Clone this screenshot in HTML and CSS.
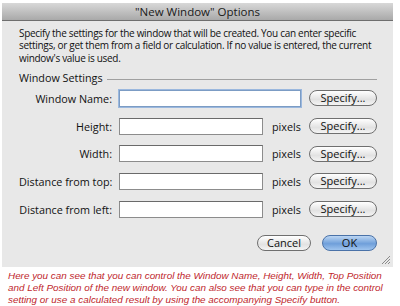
FILE: index.html
```html
<!DOCTYPE html>
<html lang="en">
<head>
  <meta charset="UTF-8" />
  <title>"New Window" Options</title>
  <link rel="stylesheet" href="styles.css">
</head>
<body>
  <div class="dialog">
    <div class="title-bar">"New Window" Options</div>
    <div class="dialog-body">
      <p class="intro">Specify the settings for the window that will be created. You can enter specific settings, or get them from a field or calculation. If no value is entered, the current window's value is used.</p>

      <div class="group-title"><span>Window Settings</span><div class="rule"></div></div>

      <div class="settings">
        <label>Window Name:</label>
        <input type="text" class="field wide focused" />
        <button class="pill">Specify...</button>

        <label>Height:</label>
        <input type="text" class="field" />
        <span class="unit">pixels</span>
        <button class="pill">Specify...</button>

        <label>Width:</label>
        <input type="text" class="field" />
        <span class="unit">pixels</span>
        <button class="pill">Specify...</button>

        <label>Distance from top:</label>
        <input type="text" class="field" />
        <span class="unit">pixels</span>
        <button class="pill">Specify...</button>

        <label>Distance from left:</label>
        <input type="text" class="field" />
        <span class="unit">pixels</span>
        <button class="pill">Specify...</button>
      </div>

      <div class="actions">
        <button class="pill action">Cancel</button>
        <button class="pill action default">OK</button>
      </div>
    </div>
    <svg class="grip" width="9" height="9" viewBox="0 0 9 9">
      <path d="M1 9 L9 1 M4 9 L9 4 M7 9 L9 7" stroke="#8a8a8a" stroke-width="1" fill="none"/>
    </svg>
  </div>

  <p class="caption">Here you can see that you can control the Window Name, Height, Width, Top Position and Left Position of the new window. You can also see that you can type in the control setting or use a calculated result by using the accompanying Specify button.</p>
</body>
</html>
```

FILE: styles.css
```css
html, body {
  margin: 0;
  padding: 0;
  background: #ffffff;
  font-family: "Open Sans", "DejaVu Sans", sans-serif;
  color: #111;
}
.dialog {
  position: relative;
  margin: 3px 0 0 2px;
  width: 391px;
  height: 264px;
  background: #e8e8e8;
  box-sizing: border-box;
}
.title-bar {
  height: 17px;
  line-height: 17px;
  text-align: center;
  font-size: 11.5px;
  color: #1a1a1a;
  background: linear-gradient(#d8d8d8, #a9a9a9);
  border-bottom: 1px solid #6e6e6e;
}
.dialog-body {
  padding: 6px 14px 0 17px;
}
.intro {
  margin: 0;
  font-size: 10px;
  line-height: 12.3px;
  letter-spacing: -0.3px;
}
.group-title {
  display: flex;
  align-items: center;
  margin-top: 6px;
  font-size: 10.8px;
}
.group-title .rule {
  flex: 1;
  height: 1px;
  margin: 5px 2px 0 4px;
  background: #a0a0a0;
}
.settings {
  display: grid;
  grid-template-columns: 100px 144px 46px 68px;
  grid-auto-rows: 17px;
  row-gap: 10.7px;
  margin-top: 5px;
  align-items: center;
  font-size: 10.8px;
}
.settings label {
  text-align: right;
  padding-right: 7px;
  white-space: nowrap;
}
.field {
  box-sizing: border-box;
  height: 17px;
  width: 144px;
  margin: 0;
  border: 1px solid #8c8c8c;
  border-top-color: #6a6a6a;
  background: #fff;
  padding: 0;
}
.field.wide {
  grid-column: span 2;
  width: 182px;
}
.field.focused {
  border: 1px solid #7c9cc4;
  box-shadow: 0 0 0 1px #9bb8de;
}
.unit {
  padding-left: 9px;
}
.pill {
  box-sizing: border-box;
  height: 16px;
  width: 68px;
  padding: 0;
  border: 1px solid #6f6f6f;
  border-radius: 8px;
  background: linear-gradient(#ffffff, #e2e2e2 60%, #f4f4f4);
  font-family: "Open Sans", "DejaVu Sans", sans-serif;
  font-size: 11px;
  line-height: 14px;
  color: #111;
}
.actions {
  display: flex;
  justify-content: flex-end;
  gap: 11px;
  margin-top: 17px;
  padding-right: 2px;
}
.pill.action {
  width: 54px;
}
.pill.default {
  width: 55px;
  border-color: #4a72a8;
  background: linear-gradient(#bcd6f3, #6f9fda 55%, #9fc4ee);
}
.grip {
  position: absolute;
  right: 3px;
  bottom: 3px;
}
.caption {
  margin: 3px 0 0 8px;
  width: 388px;
  font-family: "Liberation Sans", Arial, sans-serif;
  font-style: italic;
  font-size: 9.9px;
  line-height: 12px;
  color: #c0272d;
}
```
